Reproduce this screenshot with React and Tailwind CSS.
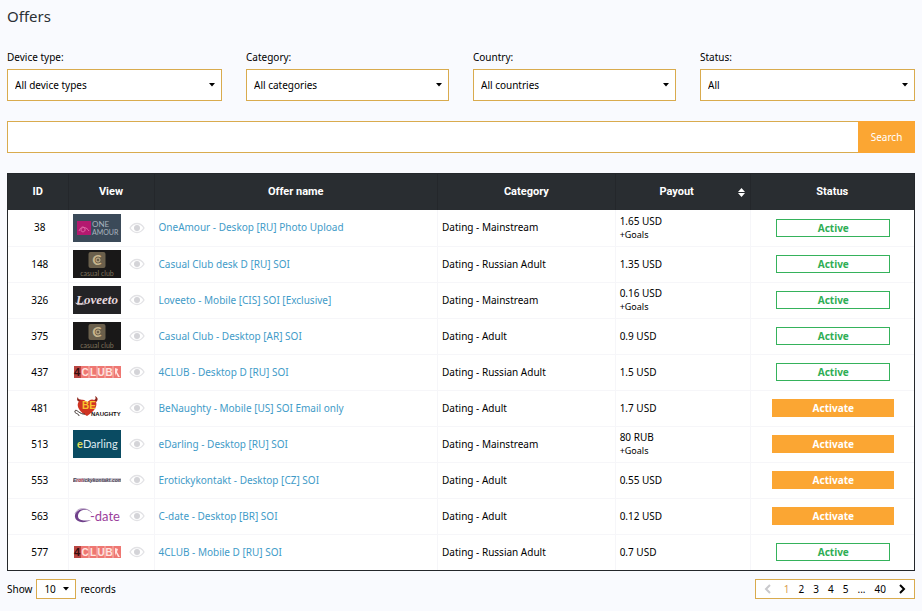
import { useState } from 'react'
import clsx from 'clsx'

const filters = [
	{ id: 'device', label: 'Device type:', value: 'All device types' },
	{ id: 'category', label: 'Category:', value: 'All categories' },
	{ id: 'country', label: 'Country:', value: 'All countries' },
	{ id: 'status', label: 'Status:', value: 'All' },
]

const offers = [
	{ id: 38, logo: 'oneamour', name: 'OneAmour - Deskop [RU] Photo Upload', category: 'Dating - Mainstream', payout: '1.65 USD', goals: true, active: true },
	{ id: 148, logo: 'casual', name: 'Casual Club desk D [RU] SOI', category: 'Dating - Russian Adult', payout: '1.35 USD', active: true },
	{ id: 326, logo: 'loveeto', name: 'Loveeto - Mobile [CIS] SOI [Exclusive]', category: 'Dating - Mainstream', payout: '0.16 USD', goals: true, active: true },
	{ id: 375, logo: 'casual', name: 'Casual Club - Desktop [AR] SOI', category: 'Dating - Adult', payout: '0.9 USD', active: true },
	{ id: 437, logo: 'club', name: '4CLUB - Desktop D [RU] SOI', category: 'Dating - Russian Adult', payout: '1.5 USD', active: true },
	{ id: 481, logo: 'naughty', name: 'BeNaughty - Mobile [US] SOI Email only', category: 'Dating - Adult', payout: '1.7 USD', active: false },
	{ id: 513, logo: 'edarling', name: 'eDarling - Desktop [RU] SOI', category: 'Dating - Mainstream', payout: '80 RUB', goals: true, active: false },
	{ id: 553, logo: 'erotic', name: 'Erotickykontakt - Desktop [CZ] SOI', category: 'Dating - Adult', payout: '0.55 USD', active: false },
	{ id: 563, logo: 'cdate', name: 'C-date - Desktop [BR] SOI', category: 'Dating - Adult', payout: '0.12 USD', active: false },
	{ id: 577, logo: 'club', name: '4CLUB - Mobile D [RU] SOI', category: 'Dating - Russian Adult', payout: '0.7 USD', active: true },
]

const logos = {
	oneamour: (
		<>
			<rect width="48" height="28" fill="#3b4a59" />
			<rect x="4" y="7" width="14" height="14" fill="#b3196f" />
			<path d="M6 17c2-5 5-5 6-2s-4 4-4 1 5-4 8 1" fill="none" stroke="#e471ae" strokeWidth="0.9" />
			<text x="19" y="13" fontFamily="Lato, sans-serif" fontSize="8" fill="#a9b4be">ONE</text>
			<text x="19" y="21" fontFamily="Lato, sans-serif" fontSize="7" fill="#a9b4be">AMOUR</text>
		</>
	),
	casual: (
		<>
			<rect width="48" height="28" fill="#191818" />
			<rect x="15.5" y="2" width="17" height="16" rx="2" fill="#6b604c" />
			<text x="24" y="15" textAnchor="middle" fontFamily="Lato, sans-serif" fontWeight="700" fontSize="14" fill="#c8b68e">C</text>
			<circle cx="25" cy="10" r="2" fill="none" stroke="#c8b68e" />
			<text x="24" y="26" textAnchor="middle" fontFamily="Lato, sans-serif" fontSize="7" fill="#7d715b">casual club</text>
		</>
	),
	loveeto: (
		<>
			<rect width="48" height="28" fill="#232326" />
			<text x="24" y="18" textAnchor="middle" fontFamily="Liberation Serif, serif" fontStyle="italic" fontWeight="700" fontSize="13" fill="#e6d9df">Loveeto</text>
			<path d="M3 17c1 3 5 1 9 1" fill="none" stroke="#e6d9df" strokeLinecap="round" />
		</>
	),
	club: (
		<>
			<rect x="1" y="8" width="47" height="12" fill="#ee7772" />
			<rect x="1" y="8" width="7" height="12" fill="#b94542" />
			<path d="M16 8v12M24 8v12M32 8v12M40 8v12" stroke="#f7b7b2" />
			<text x="1" y="18" fontFamily="Liberation Sans, sans-serif" fontWeight="700" fontSize="11" fill="#35100f">4</text>
			<g fontFamily="Liberation Sans, sans-serif" fontWeight="700" fontSize="10" fill="#ffe4e0" textAnchor="middle">
				<text x="12" y="17.5">C</text>
				<text x="20" y="17.5">L</text>
				<text x="28" y="17.5">U</text>
				<text x="36" y="17.5">B</text>
			</g>
			<path d="M42 10l3 1-1 3 3 5h-2l-2-4-1 3z" fill="#ffe4e0" />
		</>
	),
	naughty: (
		<>
			<path d="M7 8C3 7 4 4 5 3c0 3 2 2 4 3M20 6c3 0 3-2 2-4 4 2 3 5 0 7" fill="#8d241b" />
			<path d="M14 22C3 16 3 8 8 6c3-1 5 1 6 3 2-4 7-5 9-1 2 5-3 10-9 14z" fill="#cf3423" />
			<path d="M12 20C7 21 3 14 2 17s4 2 4 5" fill="none" stroke="#3c302d" />
			<text x="9" y="15" fontFamily="Liberation Sans, sans-serif" fontWeight="700" fontSize="10" fill="#f9c32e">BE</text>
			<text x="18" y="22" fontFamily="Liberation Sans, sans-serif" fontWeight="700" fontSize="6" fill="#17100f">NAUGHTY</text>
		</>
	),
	edarling: (
		<>
			<rect width="48" height="28" fill="#0a4b62" />
			<text x="4" y="18" fontFamily="Lato, sans-serif" fontSize="11" fill="#dfeaf0">
				<tspan fontWeight="700" fill="#e4df55">e</tspan>Darling
			</text>
		</>
	),
	erotic: (
		<>
			<rect y="12" width="48" height="4" fill="#cbc6d0" />
			<text x="0" y="16" fontFamily="Liberation Sans, sans-serif" fontWeight="700" fontStyle="italic" fontSize="5" fill="#4d4656">
				E<tspan fill="#b0384c">rot</tspan>ickykontakt.com
			</text>
		</>
	),
	cdate: (
		<>
			<path d="M17 9C9 4 1 10 2 15s8 7 16 3c-6 1-13 1-13-4S11 6 17 9z" fill="#70418b" />
			<path d="M2 12C4 5 14 5 19 11" fill="none" stroke="#a88bb8" strokeWidth="0.8" />
			<text x="17" y="19" fontFamily="Lato, sans-serif" fontSize="13" fill="#9b3f9c">-date</text>
		</>
	),
}

const Logo = ({ name }) => (
	<svg width="48" height="28" viewBox="0 0 48 28" className="shrink-0" aria-hidden="true">
		{logos[name]}
	</svg>
)

const Eye = () => (
	<svg width="16" height="12" viewBox="0 0 16 12" fill="none" aria-hidden="true">
		<path d="M1 6c3.5-6 10.5-6 14 0-3.5 6-10.5 6-14 0z" stroke="#e2e2e5" strokeWidth="1.3" />
		<circle cx="8" cy="6" r="3" fill="#d4d4d8" />
	</svg>
)

const Caret = () => (
	<svg width="6" height="4" viewBox="0 0 6 4" className="pointer-events-none absolute right-[7px] top-1/2 -translate-y-1/2" aria-hidden="true">
		<path d="M0 0h6L3 3.5z" fill="#000" />
	</svg>
)

const Chevron = ({ flip }) => (
	<svg width="7" height="10" viewBox="0 0 7 10" fill="none" className={clsx(flip && 'rotate-180')} aria-hidden="true">
		<path d="M1 1l4 4-4 4" stroke="currentColor" strokeWidth="2" />
	</svg>
)

const FilterSelect = ({ id, label, value }) => (
	<div>
		<label htmlFor={id} className="block leading-4">{label}</label>
		<div className="relative mt-1">
			<select id={id} className="block h-8 w-full appearance-none border border-[#d9ab4e] bg-white px-[7px]">
				<option>{value}</option>
			</select>
			<Caret />
		</div>
	</div>
)

const OfferRow = ({ offer }) => (
	<tr className="h-9 border-t border-[#f6f6f9] first:border-t-0">
		<td className="pl-1 text-center">{offer.id}</td>
		<td className="border-l border-[#f6f6f9] pl-1">
			<div className="flex items-center gap-2">
				<Logo name={offer.logo} />
				<button type="button" aria-label={`View ${offer.name}`}><Eye /></button>
			</div>
		</td>
		<td className="border-l border-[#f6f6f9] pl-1">
			<a href="#offer" className="text-[#3f9bc8]">{offer.name}</a>
		</td>
		<td className="border-l border-[#f6f6f9] pl-1">{offer.category}</td>
		<td className="border-l border-[#f6f6f9] pl-1">
			<div className="leading-[14px]">{offer.payout}</div>
			{offer.goals && <div className="text-[9px] leading-[14px]">+Goals</div>}
		</td>
		<td className="border-l border-[#f6f6f9] pl-0.5 text-center font-bold">
			{offer.active ? (
				<span className="mx-auto block w-[114px] border border-[#35b25b] leading-4 text-[#2fae55]">Active</span>
			) : (
				<button type="button" className="mx-auto block w-[122px] bg-[#fba633] leading-[18px] text-white">Activate</button>
			)}
		</td>
	</tr>
)

export default function App() {
	const [query, setQuery] = useState('')
	const [page, setPage] = useState(1)

	return (
		<main className="min-h-screen bg-[#f9fafe] px-[7px] pb-3 pt-1 font-['Noto_Sans','Open_Sans',sans-serif] text-[10px] text-black">
			<h1 className="text-[15px] leading-6 text-[#2b3035]">Offers</h1>

			<div className="mt-[21px] grid grid-cols-[215fr_203fr_203fr_215fr] gap-6">
				{filters.map((f) => (
					<FilterSelect key={f.id} {...f} />
				))}
			</div>

			<form className="mt-5 flex h-8" onSubmit={(e) => e.preventDefault()}>
				<input
					type="text"
					aria-label="Search offers"
					value={query}
					onChange={(e) => setQuery(e.target.value)}
					className="min-w-0 flex-1 border border-r-0 border-[#d9ab4e] bg-white px-2 outline-none"
				/>
				<button type="submit" className="w-[57px] bg-[#fba633] text-white">Search</button>
			</form>

			<div className="mt-5 border border-[#24272b] bg-white">
				<table className="w-full table-fixed border-collapse">
					<colgroup>
						<col className="w-[60px]" />
						<col className="w-[86px]" />
						<col className="w-[31.3%]" />
						<col className="w-[19.6%]" />
						<col className="w-[14.9%]" />
						<col />
					</colgroup>
					<thead className="bg-[#292d31] font-[Roboto,sans-serif] text-[11px] text-white">
						<tr className="h-9">
							<th>ID</th>
							<th className="border-l border-[#24272b]">View</th>
							<th className="border-l border-[#24272b]">Offer name</th>
							<th className="border-l border-[#24272b]">Category</th>
							<th className="border-l border-[#24272b] pr-[5px]">
								<button type="button" className="flex w-full items-center font-bold">
									<span className="flex-1">Payout</span>
									<svg width="7" height="9" viewBox="0 0 7 9" fill="#fff" aria-hidden="true">
										<path d="M0 4L3.5 0 7 4zM0 5h7L3.5 9z" />
									</svg>
								</button>
							</th>
							<th className="border-l border-[#24272b]">Status</th>
						</tr>
					</thead>
					<tbody>
						{offers.map((offer) => (
							<OfferRow key={offer.id} offer={offer} />
						))}
					</tbody>
				</table>
			</div>

			<div className="mt-2 flex items-center justify-between">
				<div className="flex items-center gap-1">
					<label htmlFor="page-size">Show</label>
					<div className="relative">
						<select id="page-size" className="block h-5 w-10 appearance-none border border-[#d9ab4e] bg-white pl-[7px]">
							<option>10</option>
						</select>
						<Caret />
					</div>
					<span>records</span>
				</div>
				<nav aria-label="Pages" className="flex h-5 items-center gap-[9px] border border-[#d9ab4e] bg-white px-2">
					<button type="button" aria-label="Previous page" className="mr-1 text-[#c9c9cc]"><Chevron flip /></button>
					{[1, 2, 3, 4, 5].map((n) => (
						<button key={n} type="button" onClick={() => setPage(n)} className={clsx(page === n && 'text-[#d9a04e]')}>
							{n}
						</button>
					))}
					<span>...</span>
					<button type="button" onClick={() => setPage(40)} className={clsx(page === 40 && 'text-[#d9a04e]')}>40</button>
					<button type="button" aria-label="Next page" className="ml-1"><Chevron /></button>
				</nav>
			</div>
		</main>
	)
}
